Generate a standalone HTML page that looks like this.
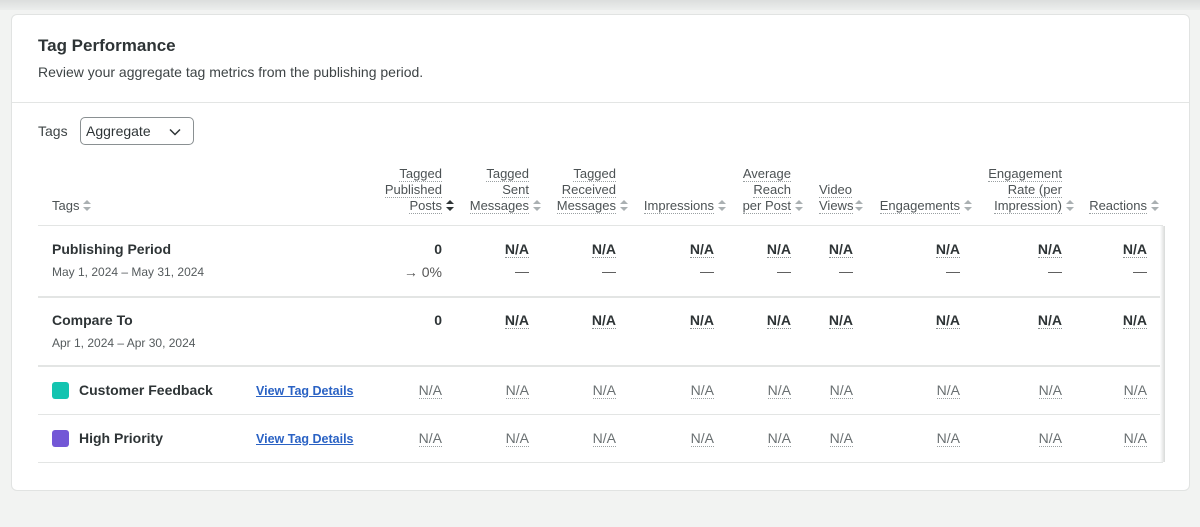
<!DOCTYPE html>
<html><head><meta charset="utf-8"><style>
*{margin:0;padding:0;box-sizing:border-box}
body{width:1200px;height:527px;background:#f2f3f2;font-family:"Liberation Sans",Arial,sans-serif;color:#2e3436;position:relative;overflow:hidden}
.topbar{position:absolute;left:0;top:0;width:1200px;height:10px;background:linear-gradient(#dcdedd,#eceeed)}
.card{position:absolute;left:11px;top:14px;width:1179px;height:477px;background:#fff;border:1px solid #e1e3e2;border-radius:6px}
.a{position:absolute;white-space:nowrap}
.h{font-size:13px;color:#4c5254;text-align:right;line-height:16px}
.h span{border-bottom:1px dotted #9aa0a2}
.s{display:block;width:8px;height:11px;position:absolute;right:-12px;bottom:3px}
.s:before,.s:after{content:"";position:absolute;left:0;border-left:4px solid transparent;border-right:4px solid transparent}
.s:before{top:0;border-bottom:4px solid #aab0b2}
.s:after{bottom:0;border-top:4px solid #aab0b2}
.s.d:after{border-top-color:#2e3436}
.s.d:before{border-bottom-color:#2e3436}
.v{font-size:14px;font-weight:bold;text-align:right}
.v.u span{border-bottom:1px dotted #8a9092}
.n{font-size:14px;color:#6a7072;text-align:right}
.n span{border-bottom:1px dotted #9aa0a2}
.dash{font-size:14px;color:#555;text-align:right}
.line{position:absolute;left:38px;width:1125px;height:1px;background:#e3e5e4}
.lnk{color:#2a62c4;font-weight:bold;font-size:12.5px;text-decoration:underline}
</style></head><body>
<div class="topbar"></div>
<div class="card"></div>
<div class="a" style="left:38px;top:36px;font-size:17px;font-weight:bold">Tag Performance</div>
<div class="a" style="left:38px;top:64px;font-size:14px;color:#3e4446">Review your aggregate tag metrics from the publishing period.</div>
<div class="a" style="left:12px;top:102px;width:1177px;height:1px;background:#e3e5e4"></div>
<div class="a" style="left:38px;top:123px;font-size:14px;color:#3e4446">Tags</div>
<div class="a" style="left:80px;top:117px;width:114px;height:28px;border:1px solid #8a9092;border-radius:5px;font-size:14px;padding:5px 0 0 5px">Aggregate
<svg style="position:absolute;left:88px;top:10px" width="12" height="8" viewBox="0 0 12 8"><path d="M1 1.5l5 5 5-5" fill="none" stroke="#2e3436" stroke-width="1.5"/></svg></div>

<div class="a h" style="left:52px;top:198px">Tags<i class="s"></i></div>
<div class="a h" style="right:758px;top:166px"><span>Tagged</span><br><span>Published</span><br><span>Posts</span><i class="s d"></i></div>
<div class="a h" style="right:671px;top:166px"><span>Tagged</span><br><span>Sent</span><br><span>Messages</span><i class="s"></i></div>
<div class="a h" style="right:584px;top:166px"><span>Tagged</span><br><span>Received</span><br><span>Messages</span><i class="s"></i></div>
<div class="a h" style="right:486px;top:198px"><span>Impressions</span><i class="s"></i></div>
<div class="a h" style="right:409px;top:166px"><span>Average</span><br><span>Reach</span><br><span>per Post</span><i class="s"></i></div>
<div class="a h" style="left:819px;top:182px;text-align:left"><span>Video</span><br><span>Views</span><i class="s" style="right:-10px"></i></div>
<div class="a h" style="right:240px;top:198px"><span>Engagements</span><i class="s"></i></div>
<div class="a h" style="right:138px;top:166px"><span>Engagement</span><br><span>Rate (per</span><br><span>Impression)</span><i class="s"></i></div>
<div class="a h" style="right:53px;top:198px"><span>Reactions</span><i class="s"></i></div>

<div class="line" style="top:225px"></div>
<div class="line" style="top:296px;height:2px"></div>
<div class="line" style="top:365px;height:2px"></div>
<div class="line" style="top:414px"></div>
<div class="line" style="top:462px"></div>
<div class="a" style="left:1160px;top:226px;width:5px;height:236px;background:linear-gradient(90deg,#fff,#d8dad9)"></div>

<!-- row1 -->
<div class="a" style="left:52px;top:241px;font-size:14px;font-weight:bold">Publishing Period</div>
<div class="a" style="left:52px;top:265px;font-size:12px;color:#555b5d">May 1, 2024 – May 31, 2024</div>
<div class="a v" style="right:758px;top:241px">0</div>
<div class="a dash" style="right:758px;top:264px">→ 0%</div>
<div class="a v u" style="right:671px;top:241px"><span>N/A</span></div>
<div class="a v u" style="right:584px;top:241px"><span>N/A</span></div>
<div class="a v u" style="right:486px;top:241px"><span>N/A</span></div>
<div class="a v u" style="right:409px;top:241px"><span>N/A</span></div>
<div class="a v u" style="right:347px;top:241px"><span>N/A</span></div>
<div class="a v u" style="right:240px;top:241px"><span>N/A</span></div>
<div class="a v u" style="right:138px;top:241px"><span>N/A</span></div>
<div class="a v u" style="right:53px;top:241px"><span>N/A</span></div>
<div class="a dash" style="right:671px;top:263px">—</div>
<div class="a dash" style="right:584px;top:263px">—</div>
<div class="a dash" style="right:486px;top:263px">—</div>
<div class="a dash" style="right:409px;top:263px">—</div>
<div class="a dash" style="right:347px;top:263px">—</div>
<div class="a dash" style="right:240px;top:263px">—</div>
<div class="a dash" style="right:138px;top:263px">—</div>
<div class="a dash" style="right:53px;top:263px">—</div>
<!-- row2 -->
<div class="a" style="left:52px;top:312px;font-size:14px;font-weight:bold">Compare To</div>
<div class="a" style="left:52px;top:336px;font-size:12px;color:#555b5d">Apr 1, 2024 – Apr 30, 2024</div>
<div class="a v" style="right:758px;top:312px">0</div>
<div class="a v u" style="right:671px;top:312px"><span>N/A</span></div>
<div class="a v u" style="right:584px;top:312px"><span>N/A</span></div>
<div class="a v u" style="right:486px;top:312px"><span>N/A</span></div>
<div class="a v u" style="right:409px;top:312px"><span>N/A</span></div>
<div class="a v u" style="right:347px;top:312px"><span>N/A</span></div>
<div class="a v u" style="right:240px;top:312px"><span>N/A</span></div>
<div class="a v u" style="right:138px;top:312px"><span>N/A</span></div>
<div class="a v u" style="right:53px;top:312px"><span>N/A</span></div>
<!-- row3 -->
<div class="a" style="left:52px;top:382px;width:17px;height:17px;border-radius:3px;background:#13c4b0"></div>
<div class="a" style="left:79px;top:382px;font-size:14px;font-weight:bold">Customer Feedback</div>
<div class="a lnk" style="left:256px;top:384px">View Tag Details</div>
<div class="a n" style="right:758px;top:382px"><span>N/A</span></div>
<div class="a n" style="right:671px;top:382px"><span>N/A</span></div>
<div class="a n" style="right:584px;top:382px"><span>N/A</span></div>
<div class="a n" style="right:486px;top:382px"><span>N/A</span></div>
<div class="a n" style="right:409px;top:382px"><span>N/A</span></div>
<div class="a n" style="right:347px;top:382px"><span>N/A</span></div>
<div class="a n" style="right:240px;top:382px"><span>N/A</span></div>
<div class="a n" style="right:138px;top:382px"><span>N/A</span></div>
<div class="a n" style="right:53px;top:382px"><span>N/A</span></div>
<!-- row4 -->
<div class="a" style="left:52px;top:430px;width:17px;height:17px;border-radius:3px;background:#7357d6"></div>
<div class="a" style="left:79px;top:430px;font-size:14px;font-weight:bold">High Priority</div>
<div class="a lnk" style="left:256px;top:432px">View Tag Details</div>
<div class="a n" style="right:758px;top:430px"><span>N/A</span></div>
<div class="a n" style="right:671px;top:430px"><span>N/A</span></div>
<div class="a n" style="right:584px;top:430px"><span>N/A</span></div>
<div class="a n" style="right:486px;top:430px"><span>N/A</span></div>
<div class="a n" style="right:409px;top:430px"><span>N/A</span></div>
<div class="a n" style="right:347px;top:430px"><span>N/A</span></div>
<div class="a n" style="right:240px;top:430px"><span>N/A</span></div>
<div class="a n" style="right:138px;top:430px"><span>N/A</span></div>
<div class="a n" style="right:53px;top:430px"><span>N/A</span></div>
</body></html>
